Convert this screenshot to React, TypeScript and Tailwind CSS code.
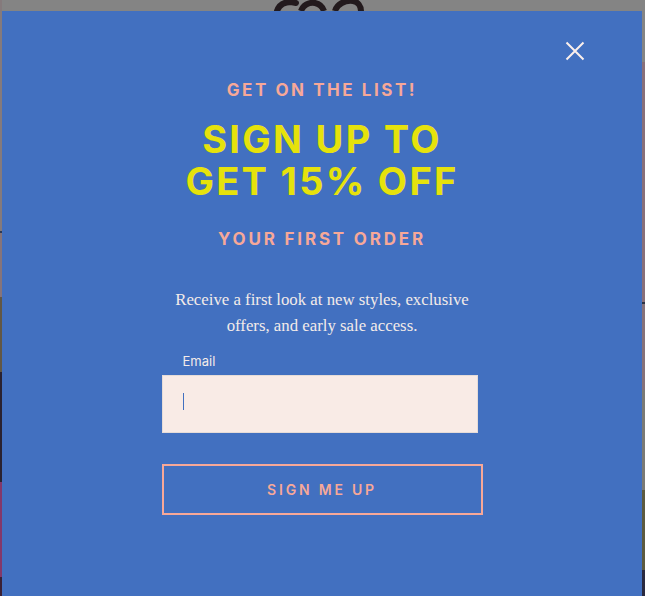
import { useState } from "react";

function BackdropLogo() {
  // fragment of the page logo peeking out above the modal
  return (
    <svg width="120" height="11" viewBox="0 0 120 11" className="block">
      <path d="M20 11 C22 5 27 2 34 2 L39 3" stroke="#231a1d" strokeWidth="6" fill="none" strokeLinecap="round" />
      <path d="M44 11 C46 5 52 2 58 3 C63 4 66 8 67 11" stroke="#231a1d" strokeWidth="6" fill="none" />
      <path d="M78 11 C80 4 88 0 96 1 C101 2 104 6 104 11" stroke="#231a1d" strokeWidth="6" fill="none" />
    </svg>
  );
}

function CloseIcon() {
  return (
    <svg width="20" height="20" viewBox="0 0 20 20" className="block">
      <path d="M1.5 1.5 L18.5 18.5 M18.5 1.5 L1.5 18.5" stroke="#fbefec" strokeWidth="2" />
    </svg>
  );
}

export default function App() {
  const [email, setEmail] = useState("");

  return (
    <div className="flex h-[596px] w-[645px] overflow-hidden bg-[#848484]">
      {/* left edge of the page behind */}
      <div className="flex w-[2px] flex-col">
        <div className="h-[231px] bg-[#857a7c]" />
        <div className="h-[2px] bg-[#2c3a55]" />
        <div className="h-[64px] bg-[#86747a]" />
        <div className="h-[75px] bg-[#625744]" />
        <div className="h-[110px] bg-[#2a2230]" />
        <div className="h-[95px] bg-[#83386a]" />
        <div className="flex-1 bg-[#3a2035]" />
      </div>

      <div className="flex w-[640px] flex-col">
        <div className="flex h-[11px] justify-center">
          <div className="ml-[-10px]">
            <BackdropLogo />
          </div>
        </div>

        <div className="flex flex-1 flex-col bg-[#4270c0]">
          <div className="flex justify-end pr-[57px] pt-[30px]">
            <button className="block">
              <CloseIcon />
            </button>
          </div>

          <div className="flex flex-col items-center pt-[19px] text-center">
            <p className="font-['Inter',sans-serif] text-[17px] font-bold leading-[20px] tracking-[0.15em] text-[#f7a898]">
              GET ON THE LIST!
            </p>
            <h1 className="mt-[18px] font-['Inter',sans-serif] text-[38px] font-bold leading-[42px] tracking-[0.06em] text-[#e6e20c]">
              SIGN UP TO
              <br />
              GET 15% OFF
            </h1>
            <p className="mt-[27px] font-['Inter',sans-serif] text-[17px] font-bold leading-[20px] tracking-[0.165em] text-[#f7a898]">
              YOUR FIRST ORDER
            </p>

            <p className="mt-[38px] w-[330px] font-['Liberation_Serif',serif] text-[16.8px] leading-[26px] text-[#f3ebe9]">
              Receive a first look at new styles, exclusive offers, and early sale access.
            </p>

            <div className="mt-[13px] flex w-[321px] flex-col">
              <label className="pl-[21px] text-left font-['Inter',sans-serif] text-[13px] leading-[18px] text-[#f3ebe9]">
                Email
              </label>
              <div className="relative mt-[5px] w-[316px]">
                <input
                  value={email}
                  onChange={(e) => setEmail(e.target.value)}
                  autoFocus
                  className="block h-[58px] w-[316px] border border-[#e6dcd8] bg-[#f9ebe6] px-[21px] font-['Inter',sans-serif] text-[15px] text-[#1f2a44] caret-[#4270c0] outline-none"
                />
                {email === "" && (
                  <span className="pointer-events-none absolute left-[21px] top-[18px] h-[17px] w-[1px] bg-[#4270c0]" />
                )}
              </div>
              <button className="mt-[31px] h-[51px] w-[321px] border-2 border-[#f7a898] font-['Inter',sans-serif] text-[14px] font-semibold tracking-[0.2em] text-[#f7a898]">
                SIGN ME UP
              </button>
            </div>
          </div>
        </div>
      </div>

      {/* right edge of the page behind */}
      <div className="flex w-[3px] flex-col">
        <div className="h-[62px] bg-[#848484]" />
        <div className="h-[240px] bg-[#88707a]" />
        <div className="h-[2px] bg-[#2c3445]" />
        <div className="h-[86px] bg-[#86727a]" />
        <div className="h-[100px] bg-[#7a7a76]" />
        <div className="h-[80px] bg-[#5c5a40]" />
        <div className="flex-1 bg-[#2a2a40]" />
      </div>
    </div>
  );
}
